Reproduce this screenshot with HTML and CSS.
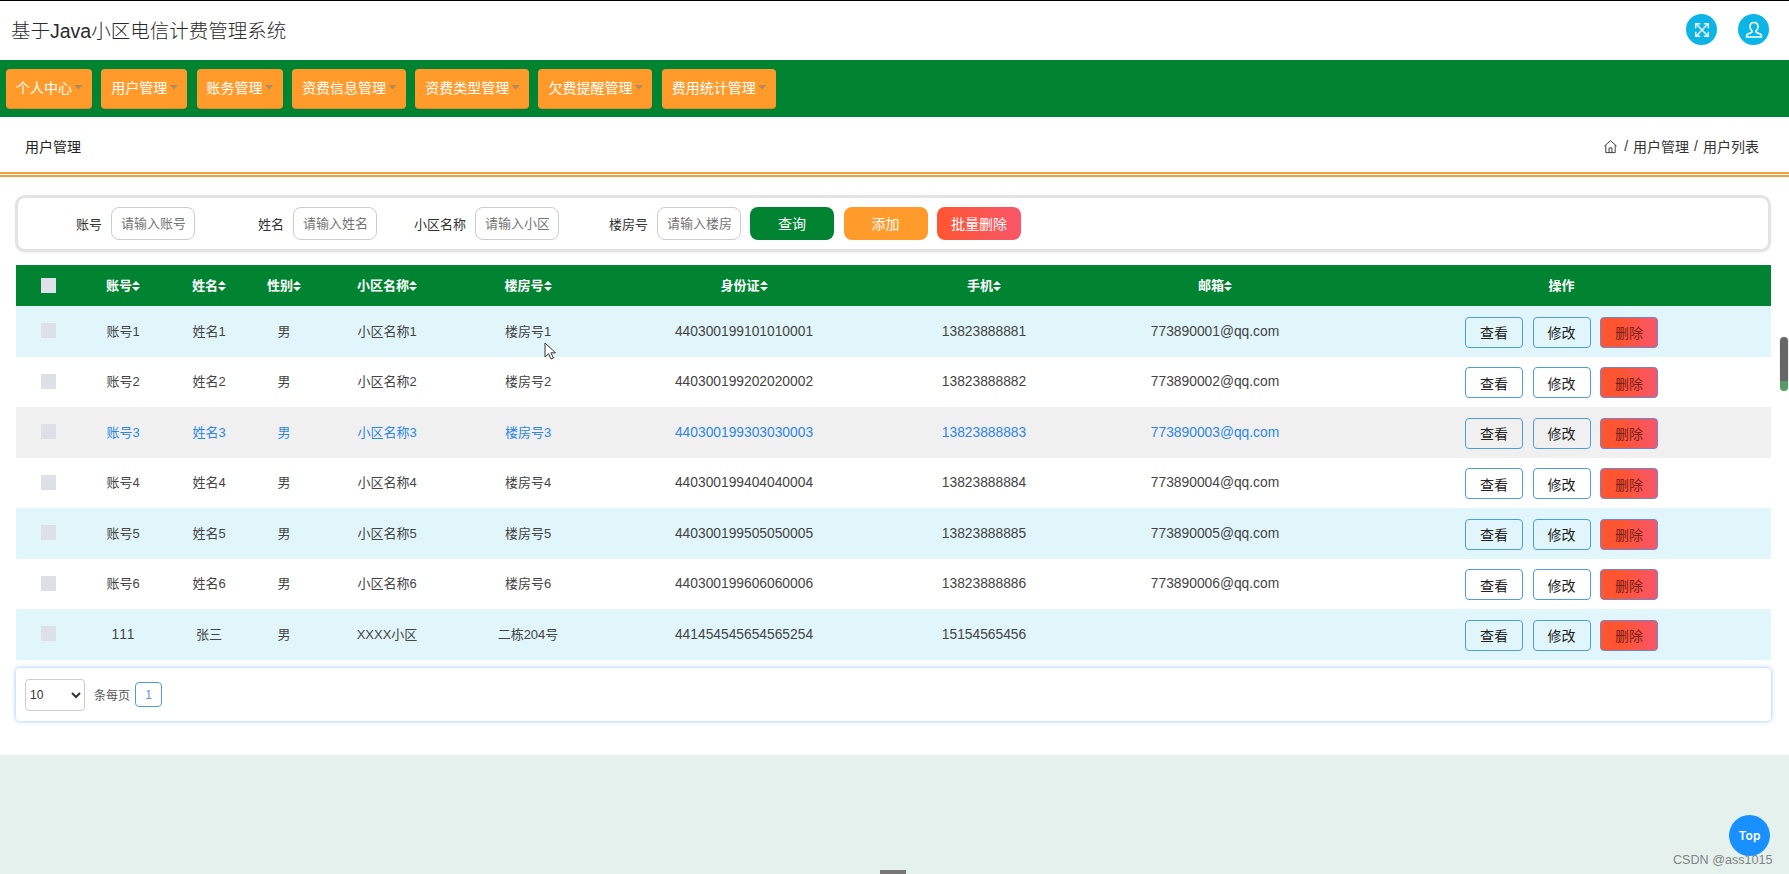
FILE: index.html
```html
<!DOCTYPE html>
<html lang="zh-CN">
<head>
<meta charset="utf-8">
<title>基于Java小区电信计费管理系统</title>
<link rel="stylesheet" href="styles.css">
</head>
<body>
<div class="page">
  <header class="topbar">
    <h1 class="brand">基于Java小区电信计费管理系统</h1>
    <div class="top-actions">
      <span class="round-icon">
        <svg viewBox="0 0 20 20" width="18" height="18" fill="none" stroke="#fff" stroke-width="1.5"><path d="M4 4l12 12M16 4L4 16"/><path d="M3 8V3h5M12 3h5v5M17 12v5h-5M8 17H3v-5" stroke-width="1.6"/></svg>
      </span>
      <span class="round-icon">
        <svg viewBox="0 0 20 20" width="20" height="20" fill="none" stroke="#fff" stroke-width="1.6"><path d="M10 2.500c-2.500 0-4 1.900-4 4.300 0 1.800.8 3.200 1.900 4.100v1.300L3.500 14.300c-.6.300-.9.800-.9 1.400v1.300h14.800v-1.300c0-.6-.3-1.100-.9-1.400l-4.400-2.100v-1.300c1.100-.9 1.900-2.300 1.900-4.100 0-2.400-1.500-4.300-4-4.300z"/></svg>
      </span>
    </div>
  </header>

  <nav class="mainnav">
    <a class="nav-btn">个人中心<i class="caret"></i></a>
    <a class="nav-btn">用户管理<i class="caret"></i></a>
    <a class="nav-btn">账务管理<i class="caret"></i></a>
    <a class="nav-btn nav-wide">资费信息管理<i class="caret"></i></a>
    <a class="nav-btn nav-wide">资费类型管理<i class="caret"></i></a>
    <a class="nav-btn nav-wide">欠费提醒管理<i class="caret"></i></a>
    <a class="nav-btn nav-wide">费用统计管理<i class="caret"></i></a>
  </nav>

  <div class="crumbbar">
    <span class="crumb-title">用户管理</span>
    <div class="crumbs">
      <svg viewBox="0 0 16 16" width="15" height="15" fill="none" stroke="#333" stroke-width="1"><path d="M1.500 7.500L8 1.800l6.500 5.700M3 6.500v8h10v-8M6.500 14.500v-5h3v5"/></svg>
      <span>/</span><span>用户管理</span><span>/</span><span>用户列表</span>
    </div>
  </div>

  <main class="content">
    <form class="search-card">
      <label class="field"><span>账号</span><input class="text-input" placeholder="请输入账号"></label>
      <label class="field"><span>姓名</span><input class="text-input" placeholder="请输入姓名"></label>
      <label class="field"><span>小区名称</span><input class="text-input" placeholder="请输入小区名称"></label>
      <label class="field"><span>楼房号</span><input class="text-input" placeholder="请输入楼房号"></label>
      <div class="search-btns">
        <button type="button" class="act act-query">查询</button>
        <button type="button" class="act act-add">添加</button>
        <button type="button" class="act act-del">批量删除</button>
      </div>
    </form>

    <table class="grid">
      <colgroup>
        <col class="c1"><col class="c2"><col class="c3"><col class="c4"><col class="c5"><col class="c6"><col class="c7"><col class="c8"><col class="c9"><col class="c10">
      </colgroup>
      <thead>
        <tr>
          <th><span class="check check-head"></span></th>
          <th>账号<i class="sort"></i></th>
          <th>姓名<i class="sort"></i></th>
          <th>性别<i class="sort"></i></th>
          <th>小区名称<i class="sort"></i></th>
          <th>楼房号<i class="sort"></i></th>
          <th>身份证<i class="sort"></i></th>
          <th>手机<i class="sort"></i></th>
          <th>邮箱<i class="sort"></i></th>
          <th>操作</th>
        </tr>
      </thead>
      <tbody>
        <tr class="tint">
          <td><span class="check"></span></td><td>账号1</td><td>姓名1</td><td>男</td><td>小区名称1</td><td>楼房号1</td><td class="num">440300199101010001</td><td class="num">13823888881</td><td class="num">773890001@qq.com</td>
          <td><div class="ops"><button class="op">查看</button><button class="op">修改</button><button class="op op-del">删除</button></div></td>
        </tr>
        <tr>
          <td><span class="check"></span></td><td>账号2</td><td>姓名2</td><td>男</td><td>小区名称2</td><td>楼房号2</td><td class="num">440300199202020002</td><td class="num">13823888882</td><td class="num">773890002@qq.com</td>
          <td><div class="ops"><button class="op">查看</button><button class="op">修改</button><button class="op op-del">删除</button></div></td>
        </tr>
        <tr class="hovered">
          <td><span class="check"></span></td><td>账号3</td><td>姓名3</td><td>男</td><td>小区名称3</td><td>楼房号3</td><td class="num">440300199303030003</td><td class="num">13823888883</td><td class="num">773890003@qq.com</td>
          <td><div class="ops"><button class="op">查看</button><button class="op">修改</button><button class="op op-del">删除</button></div></td>
        </tr>
        <tr>
          <td><span class="check"></span></td><td>账号4</td><td>姓名4</td><td>男</td><td>小区名称4</td><td>楼房号4</td><td class="num">440300199404040004</td><td class="num">13823888884</td><td class="num">773890004@qq.com</td>
          <td><div class="ops"><button class="op">查看</button><button class="op">修改</button><button class="op op-del">删除</button></div></td>
        </tr>
        <tr class="tint">
          <td><span class="check"></span></td><td>账号5</td><td>姓名5</td><td>男</td><td>小区名称5</td><td>楼房号5</td><td class="num">440300199505050005</td><td class="num">13823888885</td><td class="num">773890005@qq.com</td>
          <td><div class="ops"><button class="op">查看</button><button class="op">修改</button><button class="op op-del">删除</button></div></td>
        </tr>
        <tr>
          <td><span class="check"></span></td><td>账号6</td><td>姓名6</td><td>男</td><td>小区名称6</td><td>楼房号6</td><td class="num">440300199606060006</td><td class="num">13823888886</td><td class="num">773890006@qq.com</td>
          <td><div class="ops"><button class="op">查看</button><button class="op">修改</button><button class="op op-del">删除</button></div></td>
        </tr>
        <tr class="tint">
          <td><span class="check"></span></td><td class="num">111</td><td>张三</td><td>男</td><td>XXXX小区</td><td>二栋204号</td><td class="num">441454545654565254</td><td class="num">15154565456</td><td></td>
          <td><div class="ops"><button class="op">查看</button><button class="op">修改</button><button class="op op-del">删除</button></div></td>
        </tr>
      </tbody>
    </table>

    <div class="pager">
      <select class="page-size"><option>10</option></select>
      <span class="per-page">条每页</span>
      <a class="page-num">1</a>
    </div>
  </main>

  <footer class="footer-band"></footer>
</div>

<svg class="cursor" viewBox="0 0 12 18" width="12" height="18"><path d="M1 1v14l3.500-3.300L7 17l2.400-1-2.500-5.200h4.600z" fill="#fff" stroke="#333" stroke-width="1"/></svg>
<div class="scroll-thumb"></div>
<a class="to-top">Top</a>
<span class="watermark">CSDN @ass1015</span>
<div class="dock-tab"></div>
</body>
</html>
```
FILE: styles.css
```css
* { box-sizing: border-box; }
html, body { margin: 0; height: 874px; overflow: hidden; }
body {
  font-family: "Liberation Sans", "Noto Sans CJK SC", sans-serif;
  font-size: 14px;
  color: #333;
  background: #fff;
}
.page { display: flex; flex-direction: column; height: 874px; }

.topbar {
  height: 60px;
  flex: none;
  border-top: 1px solid #000;
  display: flex;
  align-items: center;
  justify-content: space-between;
  padding: 0 20px 2px 11px;
  background: #fff;
}
.brand { margin: 0; font-size: 19.500px; font-weight: 300; color: #2a2a2a; }
.top-actions { display: flex; gap: 21px; }
.round-icon {
  width: 31px; height: 31px; border-radius: 50%;
  background: #0bb5e6;
  display: flex; align-items: center; justify-content: center;
}

.mainnav {
  height: 57px; flex: none;
  background: #008432;
  display: flex; align-items: center; gap: 9.300px;
  padding: 0 6px;
}
.nav-btn {
  flex: none;
  width: 86px; height: 39px; padding: 0 9px 3px 10px;
  display: flex; align-items: center; justify-content: space-between;
  background: #ff9a2b;
  color: #fff;
  border-radius: 4px;
  box-shadow: 0 1px 0 #d98a30;
  font-size: 14px;
  white-space: nowrap;
}
.nav-wide { width: 114px; }
.caret {
  flex: none;
  width: 9px; height: 5px;
  background: #b08a62;
  clip-path: polygon(0 0, 100% 0, 50% 100%);
}

.crumbbar {
  height: 60px; flex: none;
  display: flex; align-items: center; justify-content: space-between;
  padding: 3px 30px 0 25px;
  border-bottom: 5px double #ee9f3f;
}
.crumb-title { font-size: 14px; color: #222; }
.crumbs { display: flex; align-items: center; gap: 5px; font-size: 14px; color: #333; }
.crumbs svg { margin-right: 1px; }

.content { height: 578px; flex: none; padding: 18px 18px 0 16px; background: #fff; }

.search-card {
  height: 57px;
  margin-left: -1px;
  border: 3px solid #e3e3e3;
  border-radius: 10px;
  display: flex; align-items: center;
  box-shadow: 0 1px 2px rgba(0,0,0,.08);
}
.field {
  width: 182px;
  display: flex; align-items: center; justify-content: flex-end; gap: 9px;
  font-size: 13px;
  color: #333;
  white-space: nowrap;
}
.field:first-child { width: 177px; }
.text-input {
  width: 84px; height: 33px;
  padding: 0 9px;
  border: 1px solid #ccc; border-radius: 8px;
  font: 13px "Liberation Sans", "Noto Sans CJK SC", sans-serif;
  outline: none;
  background: #fff;
}
.text-input::placeholder { color: #757575; opacity: 1; }
.search-btns { display: flex; gap: 9.500px; margin-left: 9px; }
.act {
  width: 84px; height: 33px;
  padding: 0 0 2px;
  border: 0; border-radius: 8px;
  color: #fff;
  font: 14px "Liberation Sans", "Noto Sans CJK SC", sans-serif;
}
.act-query { background: #008432; }
.act-add { background: #ff9a2b; }
.act-del { background: linear-gradient(90deg, #ff5530, #f9566a); }

.grid {
  margin-top: 13px;
  width: 100%;
  table-layout: fixed;
  border-collapse: collapse;
  border-spacing: 0;
}
.c1 { width: 64px; } .c2 { width: 86px; } .c3 { width: 86px; } .c4 { width: 64px; }
.c5 { width: 142px; } .c6 { width: 140px; } .c7 { width: 292px; } .c8 { width: 188px; }
.c9 { width: 274px; } .c10 { width: auto; }
.grid th {
  height: 41px; padding: 0 0 2px;
  background: #008432; color: #fff;
  font-size: 13px; font-weight: 700;
  text-align: center;
}
.grid td {
  height: 50.500px; padding: 0 0 2px;
  text-align: center; color: #444;
  font-size: 13px;
}
.grid td.num { padding: 0; font-size: 13.800px; font-kerning: none; }
.tint td { background: #e0f6fa; }
.grid .hovered td { background: #f0f0f0; color: #2e86e6; }
.check { display: inline-block; width: 15px; height: 15px; background: #dde1e7; vertical-align: middle; }
.check-head { background: #dfe2e8; }
.sort {
  display: inline-block; position: relative;
  width: 8px; height: 10px; vertical-align: -1px;
}
.sort::before, .sort::after {
  content: ""; position: absolute; left: 0;
  border-left: 4px solid transparent; border-right: 4px solid transparent;
}
.sort::before { top: 0; border-bottom: 4px solid #fff; }
.sort::after { bottom: 0; border-top: 4px solid #fff; }

.ops { display: flex; justify-content: center; gap: 9.500px; margin-top: 4px; }
.op {
  width: 58px; height: 31px; padding: 0;
  border: 1px solid #4f9ce0; border-radius: 4px;
  background: transparent;
  color: #222;
  font: 14px "Liberation Sans", "Noto Sans CJK SC", sans-serif;
}
.op-del { background: linear-gradient(90deg, #ff5530 35%, #f7566a); color: #7a1d1d; border-color: #6f86cf; }

.pager {
  margin-top: 8.500px;
  height: 53px;
  display: flex; align-items: center;
  padding-left: 9px;
  border-radius: 4px;
  background: #fff;
  box-shadow: 0 0 4px rgba(64,150,255,.6);
}
.page-size {
  width: 60px; height: 32px;
  border: 1px solid #ccc; border-radius: 4px;
  background: #fff; color: #333;
  font: 12px "Liberation Sans", sans-serif;
}
.per-page { margin-left: 9px; font-size: 12px; color: #555; }
.page-num {
  margin-left: 5px;
  width: 27px; height: 25px;
  display: flex; align-items: center; justify-content: center;
  border: 1px solid #4f9ce0; border-radius: 4px;
  color: #5b93e6; font-size: 12px;
}

.footer-band { flex: 1; background: #e5f1ec; }

.cursor { position: absolute; left: 544px; top: 342px; }
.scroll-thumb {
  position: absolute; left: 1780px; top: 337px;
  width: 8px; height: 54px; border-radius: 4px;
  background: linear-gradient(#666 0 82%, #5a9a6a 82%);
  box-shadow: 0 0 2px #ccc;
}
.to-top {
  position: absolute; left: 1729px; top: 815px;
  width: 41px; height: 41px; border-radius: 50%;
  background: #1890ff; color: #fff;
  display: flex; align-items: center; justify-content: center;
  font: 600 12px "Inter", "Liberation Sans", sans-serif;
}
.watermark {
  position: absolute; left: 1673px; top: 853px;
  font: 12.600px "Liberation Sans", sans-serif;
  color: #7f8684; white-space: nowrap;
}
.dock-tab { position: absolute; left: 880px; top: 870px; width: 26px; height: 4px; background: #777; }
```
